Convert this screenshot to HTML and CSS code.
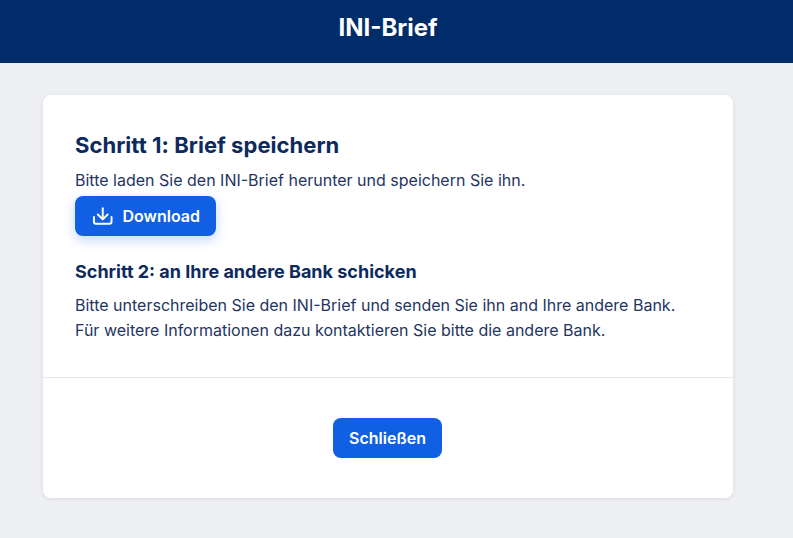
FILE: index.html
```html
<!DOCTYPE html>
<html lang="de">
<head>
    <meta charset="UTF-8">
    <meta name="viewport" content="width=device-width, initial-scale=1.0">
    <title>INI-Brief</title>
    <link rel="stylesheet" href="styles.css">
</head>
<body>
    <header class="header">
        <h1 class="header-title">INI-Brief</h1>
    </header>

    <main class="page">
        <div class="card">
            <section class="card-body">
                <h2 class="step-title">Schritt 1: Brief speichern</h2>
                <p class="text">Bitte laden Sie den INI-Brief herunter und speichern Sie ihn.</p>
                <button class="button button-download">
                    <svg viewBox="0 0 24 24" fill="none" stroke="currentColor" stroke-width="2" stroke-linecap="round" stroke-linejoin="round">
                        <path d="M3 13v5a2 2 0 0 0 2 2h14a2 2 0 0 0 2-2v-5"/>
                        <path d="M12 4v11"/>
                        <path d="M7 10.500l5 5 5-5"/>
                    </svg>
                    Download
                </button>
                <h3 class="step-subtitle">Schritt 2: an Ihre andere Bank schicken</h3>
                <p class="text">Bitte unterschreiben Sie den INI-Brief und senden Sie ihn and Ihre andere Bank.<br>Für weitere Informationen dazu kontaktieren Sie bitte die andere Bank.</p>
            </section>
            <footer class="card-footer">
                <button class="button button-close">Schließen</button>
            </footer>
        </div>
    </main>
</body>
</html>
```

FILE: styles.css
```css
:root {
    --navy: #002d69;
    --title: #0c2a5e;
    --text: #1f3562;
    --primary: #1160e4;
    --background: #edeff2;
    --border: #e4e7eb;
}

* {
    margin: 0;
    padding: 0;
    box-sizing: border-box;
}

body {
    font-family: Inter, "Liberation Sans", sans-serif;
    background: var(--background);
    color: var(--text);
    min-height: 100vh;
    overflow: hidden;
}

.header {
    height: 63px;
    padding: 0 17px 8px 0;
    background: var(--navy);
    display: flex;
    align-items: center;
    justify-content: center;
}

.header-title {
    color: #ffffff;
    font-size: 24px;
    font-weight: 700;
    line-height: 1;
}

.page {
    padding: 32px 60px 40px 43px;
}

.card {
    background: #ffffff;
    border-radius: 8px;
    box-shadow: 0 1px 4px rgb(0 0 0 / 0.08);
}

.card-body {
    padding: 37px 32px 34px;
    border-bottom: 1px solid var(--border);
}

.step-title {
    color: var(--title);
    font-size: 22px;
    font-weight: 700;
    line-height: 27px;
    letter-spacing: 0.04px;
    margin-bottom: 9px;
}

.step-subtitle {
    color: var(--title);
    font-size: 18px;
    font-weight: 700;
    line-height: 24px;
    margin-bottom: 9px;
}

.text {
    font-size: 16px;
    line-height: 25px;
}

.button {
    display: inline-flex;
    align-items: center;
    justify-content: center;
    gap: 8px;
    height: 40px;
    padding: 0 16px;
    border: none;
    border-radius: 8px;
    background: var(--primary);
    color: #ffffff;
    font-family: inherit;
    font-size: 16px;
    font-weight: 600;
}

.button svg {
    width: 24px;
    height: 24px;
}

.button-download {
    width: 141px;
    margin: 3px 0 24px;
    box-shadow: 0 4px 12px rgb(17 96 228 / 0.25);
}

.button-close {
    width: 109px;
    margin-right: 1px;
}

.card-footer {
    display: flex;
    justify-content: center;
    padding: 40px 0;
}
```
